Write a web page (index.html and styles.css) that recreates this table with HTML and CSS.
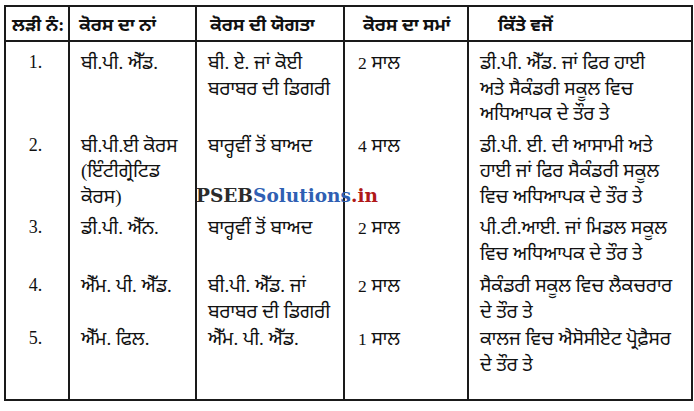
FILE: index.html
```html
<!DOCTYPE html>
<html lang="pa">
<head>
<meta charset="utf-8">
<link rel="stylesheet" href="styles.css">
</head>
<body>
<div class="page">
  <table class="courses">
    <colgroup>
      <col class="c1"><col class="c2"><col class="c3"><col class="c4"><col class="c5">
    </colgroup>
    <thead>
      <tr>
        <th class="h1">ਲੜੀ ਨੰ:</th>
        <th class="h2">ਕੋਰਸ ਦਾ ਨਾਂ</th>
        <th class="h3">ਕੋਰਸ ਦੀ ਯੋਗਤਾ</th>
        <th class="h4">ਕੋਰਸ ਦਾ ਸਮਾਂ</th>
        <th class="h5">ਕਿੱਤੇ ਵਜੋਂ</th>
      </tr>
    </thead>
    <tbody>
      <tr class="r1">
        <td class="num">1.</td>
        <td>ਬੀ.ਪੀ. ਐੱਡ.</td>
        <td>ਬੀ. ਏ. ਜਾਂ ਕੋਈ<br>ਬਰਾਬਰ ਦੀ ਡਿਗਰੀ</td>
        <td class="dur"><span class="n">2</span> ਸਾਲ</td>
        <td>ਡੀ.ਪੀ. ਐੱਡ. ਜਾਂ ਫਿਰ ਹਾਈ<br>ਅਤੇ ਸੈਕੰਡਰੀ ਸਕੂਲ ਵਿਚ<br>ਅਧਿਆਪਕ ਦੇ ਤੌਰ ਤੇ</td>
      </tr>
      <tr class="r2">
        <td class="num">2.</td>
        <td>ਬੀ.ਪੀ.ਈ ਕੋਰਸ<br>(ਇੰਟੀਗ੍ਰੇਟਿਡ<br>ਕੋਰਸ)</td>
        <td>ਬਾਰ੍ਹਵੀਂ ਤੋਂ ਬਾਅਦ</td>
        <td class="dur"><span class="n">4</span> ਸਾਲ</td>
        <td>ਡੀ.ਪੀ. ਈ. ਦੀ ਆਸਾਮੀ ਅਤੇ<br>ਹਾਈ ਜਾਂ ਫਿਰ ਸੈਕੰਡਰੀ ਸਕੂਲ<br>ਵਿਚ ਅਧਿਆਪਕ ਦੇ ਤੌਰ ਤੇ</td>
      </tr>
      <tr class="r3">
        <td class="num">3.</td>
        <td>ਡੀ.ਪੀ. ਐੱਨ.</td>
        <td>ਬਾਰ੍ਹਵੀਂ ਤੋਂ ਬਾਅਦ</td>
        <td class="dur"><span class="n">2</span> ਸਾਲ</td>
        <td>ਪੀ.ਟੀ.ਆਈ. ਜਾਂ ਮਿਡਲ ਸਕੂਲ<br>ਵਿਚ ਅਧਿਆਪਕ ਦੇ ਤੌਰ ਤੇ</td>
      </tr>
      <tr class="r4">
        <td class="num">4.</td>
        <td>ਐੱਮ. ਪੀ. ਐੱਡ.</td>
        <td>ਬੀ.ਪੀ. ਐੱਡ. ਜਾਂ<br>ਬਰਾਬਰ ਦੀ ਡਿਗਰੀ</td>
        <td class="dur"><span class="n">2</span> ਸਾਲ</td>
        <td>ਸੈਕੰਡਰੀ ਸਕੂਲ ਵਿਚ ਲੈਕਚਰਾਰ<br>ਦੇ ਤੌਰ ਤੇ</td>
      </tr>
      <tr class="r5">
        <td class="num">5.</td>
        <td>ਐੱਮ. ਫਿਲ.</td>
        <td>ਐੱਮ. ਪੀ. ਐੱਡ.</td>
        <td class="dur"><span class="n">1</span> ਸਾਲ</td>
        <td>ਕਾਲਜ ਵਿਚ ਐਸੋਸੀਏਟ ਪ੍ਰੋਫ਼ੈਸਰ<br>ਦੇ ਤੌਰ ਤੇ</td>
      </tr>
    </tbody>
  </table>
  <div class="watermark"><span class="wm-a">PSEB</span><span class="wm-b">Solutions</span><span class="wm-c">.in</span></div>
</div>
</body>
</html>
```

FILE: styles.css
```css
html, body {
  margin: 0;
  padding: 0;
  background: #ffffff;
}
.page {
  position: relative;
  padding: 5px 0 0 4px;
  width: 694px;
  height: 411px;
  box-sizing: border-box;
}
.courses {
  border-collapse: collapse;
  table-layout: fixed;
  width: 687px;
  font-family: "Liberation Serif", "Noto Sans Gurmukhi", "Lohit Gurmukhi", "Noto Sans", sans-serif;
  font-size: 19px;
  color: #111;
  border: 2px solid #1a1a1a;
}
.c1 { width: 64px; }
.c2 { width: 127px; }
.c3 { width: 148px; }
.c4 { width: 124px; }
.c5 { width: 224px; }
th, td {
  border-left: 2px solid #1a1a1a;
  border-right: 2px solid #1a1a1a;
  text-align: left;
  vertical-align: top;
  white-space: nowrap;
}
th {
  font-weight: bold;
  font-size: 18px;
  height: 35px;
  padding: 3px 0 0 9px;
  border-bottom: 2px solid #1a1a1a;
  vertical-align: middle;
  line-height: 20px;
  box-sizing: border-box;
}
th.h1 { padding-left: 6px; }
th.h3 { padding-left: 13px; }
th.h4 { padding-left: 18px; }
th.h5 { padding-left: 29px; }
td {
  line-height: 25.5px;
  padding: 6px 0 0 11px;
}
td.num { text-align: center; padding-left: 0; padding-right: 3px; font-size: 18px; }
td.dur { padding-left: 13px; }
.n { font-size: 17.5px; }
.r1 td { padding-top: 8px; }
.r4 td { padding-top: 7px; }
.r5 td { padding-top: 2px; padding-bottom: 22px; }
.watermark {
  position: absolute;
  left: 196px;
  top: 185px;
  font-family: "DejaVu Serif", "Liberation Serif", serif;
  font-weight: bold;
  font-size: 18.5px;
  line-height: 22px;
}
.wm-a { color: #2b2b2b; }
.wm-b { color: #2f5fb3; }
.wm-c { color: #b01818; }
```
